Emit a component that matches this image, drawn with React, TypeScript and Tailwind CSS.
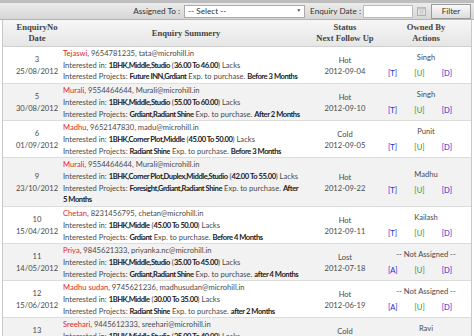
type Row = {
  no: string;
  date: string;
  name: string;
  phone: string;
  email: string;
  interest: string;
  range: string;
  projects: string;
  when: string;
  status: string;
  follow: string;
  owner: string;
  first: string;
};

const rows: Row[] = [
  { no: "3", date: "25/08/2012", name: "Tejaswi", phone: "9654781235", email: "tata@microhill.in", interest: "1BHK,Middle,Studio", range: "36.00 To 46.00", projects: "Future INN,Grdiant", when: "Before 3 Months", status: "Hot", follow: "2012-09-04", owner: "Singh", first: "T" },
  { no: "5", date: "30/08/2012", name: "Murali", phone: "9554464644", email: "Murali@microhill.in", interest: "1BHK,Middle,Studio", range: "55.00 To 60.00", projects: "Grdiant,Radiant Shine", when: "After 2 Months", status: "Hot", follow: "2012-09-10", owner: "Singh", first: "T" },
  { no: "6", date: "01/09/2012", name: "Madhu", phone: "9652147830", email: "madu@microhill.in", interest: "1BHK,Corner Plot,Middle", range: "45.00 To 50.00", projects: "Radiant Shine", when: "Before 3 Months", status: "Cold", follow: "2012-09-05", owner: "Punit", first: "T" },
  { no: "9", date: "23/10/2012", name: "Murali", phone: "9554464644", email: "Murali@microhill.in", interest: "1BHK,Corner Plot,Duplex,Middle,Studio", range: "42.00 To 55.00", projects: "Foresight,Grdiant,Radiant Shine", when: "After 5 Months", status: "Hot", follow: "2012-09-22", owner: "Madhu", first: "T" },
  { no: "10", date: "15/04/2012", name: "Chetan", phone: "8231456795", email: "chetan@microhill.in", interest: "1BHK,Middle", range: "45.00 To 50.00", projects: "Grdiant", when: "Before 4 Months", status: "Hot", follow: "2012-09-11", owner: "Kailash", first: "T" },
  { no: "11", date: "14/05/2012", name: "Priya", phone: "9845621333", email: "priyanka.nc@microhill.in", interest: "1BHK,Middle,Studio", range: "35.00 To 45.00", projects: "Grdiant,Radiant Shine", when: "after 4 Months", status: "Lost", follow: "2012-07-18", owner: "-- Not Assigned --", first: "A" },
  { no: "12", date: "15/06/2012", name: "Madhu sudan", phone: "9745621236", email: "madhusudan@microhill.in", interest: "1BHK,Middle", range: "30.00 To 35.00", projects: "Radiant Shine", when: "after 2 Months", status: "Hot", follow: "2012-06-19", owner: "-- Not Assigned --", first: "A" },
  { no: "13", date: "20/06/2012", name: "Sreehari", phone: "9445612333", email: "sreehari@microhill.in", interest: "1BHK,Middle,Studio", range: "35.00 To 40.00", projects: "Grdiant", when: "Before 3 Months", status: "Cold", follow: "2012-06-25", owner: "Ravi", first: "T" },
];

const sans = "font-['Lato','Open_Sans',sans-serif]";
const serif = "font-['Liberation_Serif',serif]";
const bold = "font-bold text-[#222] tracking-[-0.45px]";

export default function App() {
  return (
    <div className={`w-[474px] h-[336px] overflow-hidden bg-white ${sans} text-[7.6px] text-[#4a4a4a]`}>
      <div className="border-t-[3px] border-[#bdbdbd] bg-gradient-to-b from-[#ececec] to-[#d6d6d6] border-b border-b-[#b5b5b5] h-[20px] flex items-center justify-end pr-[3px] text-[8.2px] text-[#333]">
        <span className="mr-[4px]">Assigned To :</span>
        <div className="w-[121px] h-[13px] bg-white border border-[#aaa] flex items-center justify-between px-[3px]">
          <span>-- Select --</span>
          <span className="text-[5px] text-[#555]">▼</span>
        </div>
        <span className="ml-[5px] mr-[2px]">Enquiry Date :</span>
        <div className="w-[50px] h-[13px] bg-white border border-[#bbb]" />
        <svg width="9" height="9" viewBox="0 0 9 9" className="ml-[4px] mr-[5px]">
          <rect x="0.5" y="0.5" width="8" height="8" fill="#e4e4e4" stroke="#b0b0b0" />
          <rect x="0.5" y="0.5" width="8" height="2" fill="#c4c4c4" />
          <path d="M2 4h5M2 6h5M3.5 3v5M5.5 3v5" stroke="#c8c8c8" strokeWidth="0.6" />
        </svg>
        <div className="w-[40px] h-[15px] border border-[#9a9a9a] bg-gradient-to-b from-[#fafafa] to-[#dcdcdc] flex items-center justify-center">
          Filter
        </div>
      </div>

      <div className="mx-[2px] border-l border-r border-[#c8c8c8]">
        <div className={`flex h-[27px] items-center bg-gradient-to-b from-[#f6f6f6] to-[#e6e6e6] border-b border-[#d0d0d0] ${serif} font-bold text-[8.6px] text-[#444] leading-[11px]`}>
          <div className="w-[60px] pl-[8px] text-center">EnquiryNo<br />Date</div>
          <div className="w-[246px] text-center">Enquiry Summery</div>
          <div className="w-[72px] text-center">Status<br />Next Follow Up</div>
          <div className="flex-1 text-center">Owned By<br />Actions</div>
        </div>

        {rows.map((r, i) => (
          <div
            key={i}
            className={`flex items-stretch border-b border-[#dcdcdc] leading-[11.7px] pt-[1px] ${i % 2 === 1 ? "bg-[#f2f2f2]" : "bg-white"}`}
          >
            <div className="w-[60px] pl-[8px] flex flex-col items-center justify-center">
              <span>{r.no}</span>
              <span>{r.date}</span>
            </div>
            <div className="w-[246px] pr-[9px]">
              <div>
                <span className="text-[#e0262b]">{r.name}</span>, {r.phone}, {r.email}
              </div>
              <div>
                Interested in: <span className={bold}>{r.interest}</span> (<span className={bold}>{r.range}</span>) Lacks
              </div>
              <div>
                Interested Projects: <span className={bold}>{r.projects}</span> Exp. to purchase. <span className={bold}>{r.when}</span>
              </div>
            </div>
            <div className="w-[72px] flex flex-col items-center justify-center leading-[11px]">
              <span>{r.status}</span>
              <span>{r.follow}</span>
            </div>
            <div className="flex-1 flex flex-col justify-center gap-[4px]">
              <div className="text-center">{r.owner}</div>
              <div className="flex justify-between pl-[7px] pr-[19px]">
                <span className="text-[#2a2ad0]">[{r.first}]</span>
                <span className="text-[#4a8a10]">[U]</span>
                <span className="text-[#2a2ad0]">[D]</span>
              </div>
            </div>
          </div>
        ))}
      </div>
    </div>
  );
}
